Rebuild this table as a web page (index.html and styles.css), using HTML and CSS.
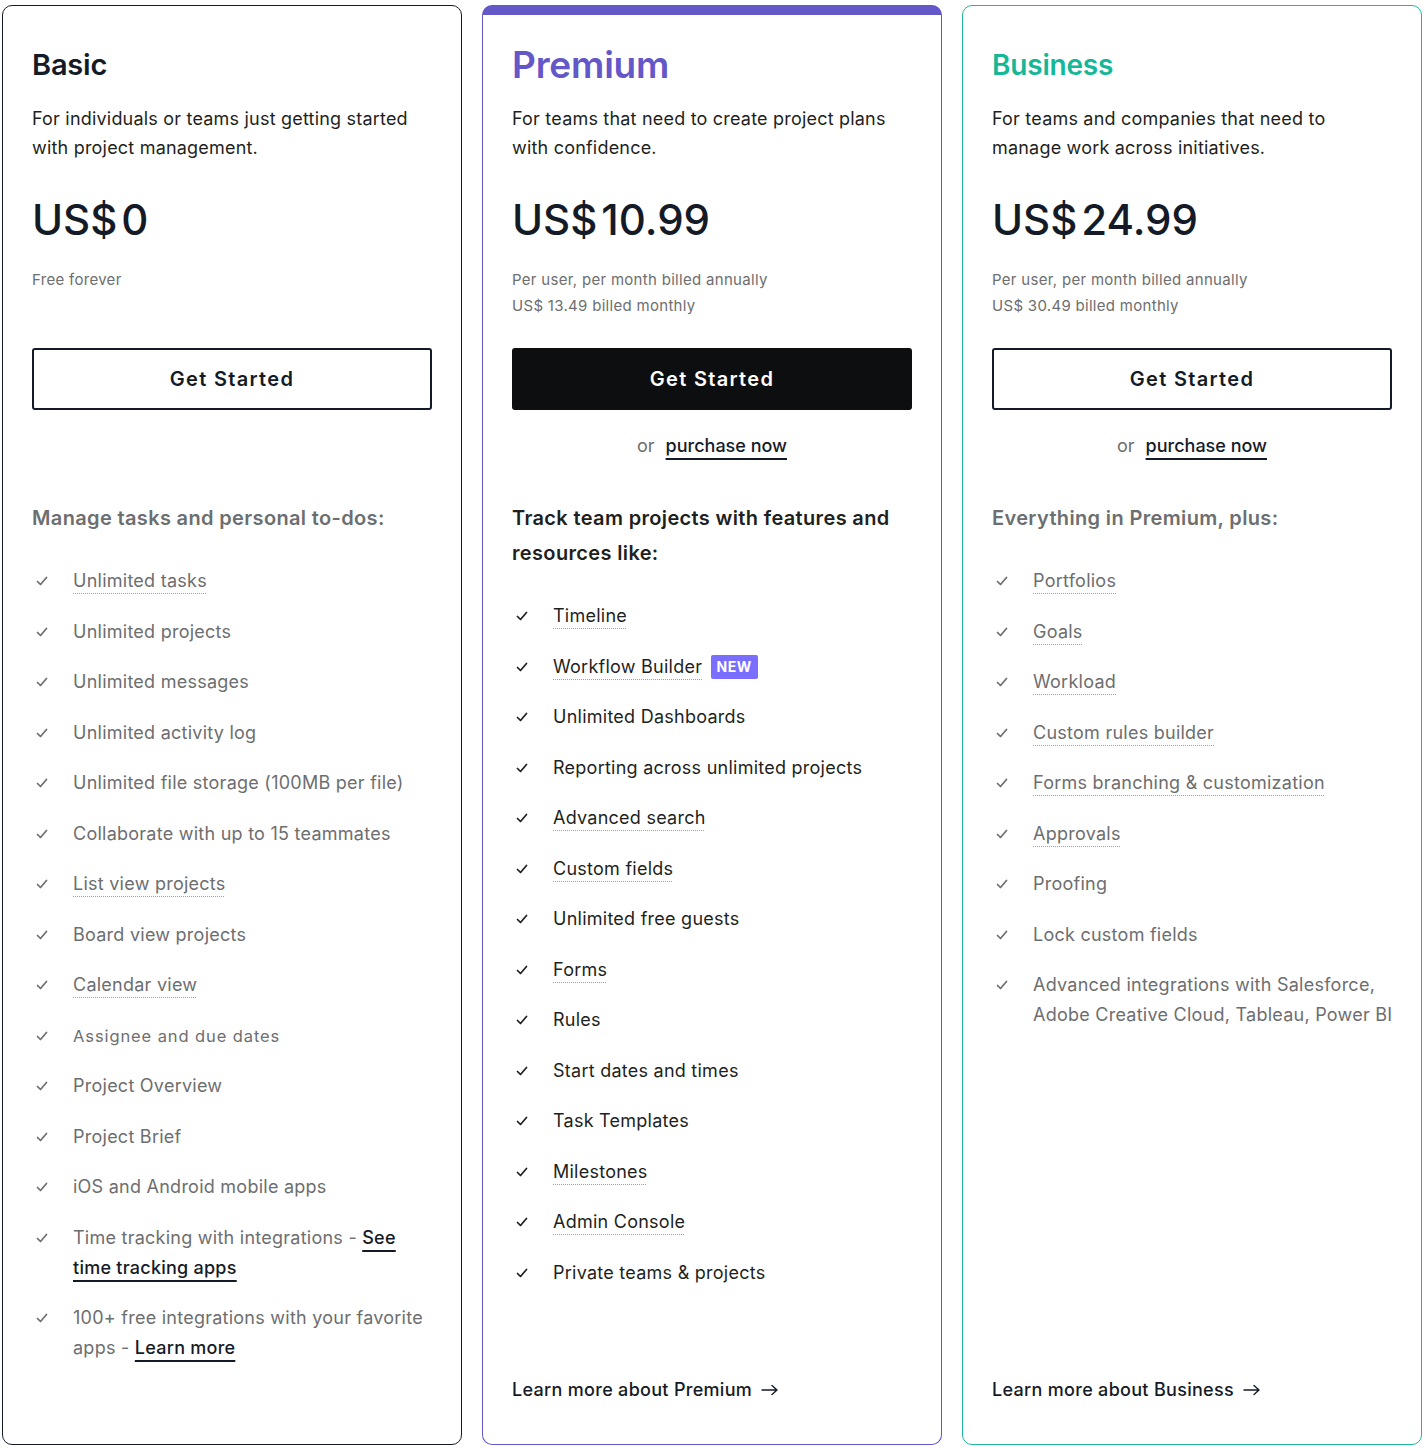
FILE: index.html
```html
<!DOCTYPE html>
<html lang="en">
<head>
<meta charset="utf-8">
<title>Pricing</title>
<link rel="stylesheet" href="styles.css">
</head>
<body>
<div class="plans">
  <section class="card card-basic">
    <h2 class="title">Basic</h2>
    <p class="desc">For individuals or teams just getting started with project management.</p>
    <div class="price">US$<span class="amt">0</span></div>
    <div class="sub">Free forever</div>
    <a class="btn">Get Started</a>
    <div class="or hidden">or <a class="buy">purchase now</a></div>
    <h3 class="lead muted">Manage tasks and personal to-dos:</h3>
    <ul class="feats muted">
      <li><svg class="chk" viewBox="0 0 12 12"><path d="M1.5 6.5l3 3 6-7"/></svg><span class="tip">Unlimited tasks</span></li>
      <li><svg class="chk" viewBox="0 0 12 12"><path d="M1.5 6.5l3 3 6-7"/></svg><span>Unlimited projects</span></li>
      <li><svg class="chk" viewBox="0 0 12 12"><path d="M1.5 6.5l3 3 6-7"/></svg><span>Unlimited messages</span></li>
      <li><svg class="chk" viewBox="0 0 12 12"><path d="M1.5 6.5l3 3 6-7"/></svg><span>Unlimited activity log</span></li>
      <li><svg class="chk" viewBox="0 0 12 12"><path d="M1.5 6.5l3 3 6-7"/></svg><span>Unlimited file storage (100MB per file)</span></li>
      <li><svg class="chk" viewBox="0 0 12 12"><path d="M1.5 6.5l3 3 6-7"/></svg><span>Collaborate with up to 15 teammates</span></li>
      <li><svg class="chk" viewBox="0 0 12 12"><path d="M1.5 6.5l3 3 6-7"/></svg><span class="tip">List view projects</span></li>
      <li><svg class="chk" viewBox="0 0 12 12"><path d="M1.5 6.5l3 3 6-7"/></svg><span>Board view projects</span></li>
      <li><svg class="chk" viewBox="0 0 12 12"><path d="M1.5 6.5l3 3 6-7"/></svg><span class="tip">Calendar view</span></li>
      <li><svg class="chk" viewBox="0 0 12 12"><path d="M1.5 6.5l3 3 6-7"/></svg><span class="small">Assignee and due dates</span></li>
      <li><svg class="chk" viewBox="0 0 12 12"><path d="M1.5 6.5l3 3 6-7"/></svg><span>Project Overview</span></li>
      <li><svg class="chk" viewBox="0 0 12 12"><path d="M1.5 6.5l3 3 6-7"/></svg><span>Project Brief</span></li>
      <li><svg class="chk" viewBox="0 0 12 12"><path d="M1.5 6.5l3 3 6-7"/></svg><span>iOS and Android mobile apps</span></li>
      <li><svg class="chk" viewBox="0 0 12 12"><path d="M1.5 6.5l3 3 6-7"/></svg><span>Time tracking with integrations - <a class="strong">See<br>time tracking apps</a></span></li>
      <li><svg class="chk" viewBox="0 0 12 12"><path d="M1.5 6.5l3 3 6-7"/></svg><span>100+ free integrations with your favorite apps - <a class="strong">Learn more</a></span></li>
    </ul>
    <div class="more hidden">Learn more</div>
  </section>

  <section class="card card-premium">
    <h2 class="title">Premium</h2>
    <p class="desc">For teams that need to create project plans with confidence.</p>
    <div class="price">US$<span class="amt">10.99</span></div>
    <div class="sub">Per user, per month billed annually<br>US$ 13.49 billed monthly</div>
    <a class="btn btn-dark">Get Started</a>
    <div class="or">or <a class="buy">purchase now</a></div>
    <h3 class="lead">Track team projects with features and resources like:</h3>
    <ul class="feats">
      <li><svg class="chk" viewBox="0 0 12 12"><path d="M1.5 6.5l3 3 6-7"/></svg><span class="tip">Timeline</span></li>
      <li><svg class="chk" viewBox="0 0 12 12"><path d="M1.5 6.5l3 3 6-7"/></svg><span><span class="tip">Workflow Builder</span> <span class="badge">NEW</span></span></li>
      <li><svg class="chk" viewBox="0 0 12 12"><path d="M1.5 6.5l3 3 6-7"/></svg><span>Unlimited Dashboards</span></li>
      <li><svg class="chk" viewBox="0 0 12 12"><path d="M1.5 6.5l3 3 6-7"/></svg><span>Reporting across unlimited projects</span></li>
      <li><svg class="chk" viewBox="0 0 12 12"><path d="M1.5 6.5l3 3 6-7"/></svg><span class="tip">Advanced search</span></li>
      <li><svg class="chk" viewBox="0 0 12 12"><path d="M1.5 6.5l3 3 6-7"/></svg><span class="tip">Custom fields</span></li>
      <li><svg class="chk" viewBox="0 0 12 12"><path d="M1.5 6.5l3 3 6-7"/></svg><span>Unlimited free guests</span></li>
      <li><svg class="chk" viewBox="0 0 12 12"><path d="M1.5 6.5l3 3 6-7"/></svg><span class="tip">Forms</span></li>
      <li><svg class="chk" viewBox="0 0 12 12"><path d="M1.5 6.5l3 3 6-7"/></svg><span>Rules</span></li>
      <li><svg class="chk" viewBox="0 0 12 12"><path d="M1.5 6.5l3 3 6-7"/></svg><span>Start dates and times</span></li>
      <li><svg class="chk" viewBox="0 0 12 12"><path d="M1.5 6.5l3 3 6-7"/></svg><span>Task Templates</span></li>
      <li><svg class="chk" viewBox="0 0 12 12"><path d="M1.5 6.5l3 3 6-7"/></svg><span class="tip">Milestones</span></li>
      <li><svg class="chk" viewBox="0 0 12 12"><path d="M1.5 6.5l3 3 6-7"/></svg><span class="tip">Admin Console</span></li>
      <li><svg class="chk" viewBox="0 0 12 12"><path d="M1.5 6.5l3 3 6-7"/></svg><span>Private teams &amp; projects</span></li>
    </ul>
    <a class="more">Learn more about Premium <svg class="arrow" viewBox="0 0 18 12"><path d="M1 6h15M11 1.5 16 6l-5 4.5"/></svg></a>
  </section>

  <section class="card card-business">
    <h2 class="title">Business</h2>
    <p class="desc">For teams and companies that need to manage work across initiatives.</p>
    <div class="price">US$<span class="amt">24.99</span></div>
    <div class="sub">Per user, per month billed annually<br>US$ 30.49 billed monthly</div>
    <a class="btn">Get Started</a>
    <div class="or">or <a class="buy">purchase now</a></div>
    <h3 class="lead muted">Everything in Premium, plus:</h3>
    <ul class="feats muted">
      <li><svg class="chk" viewBox="0 0 12 12"><path d="M1.5 6.5l3 3 6-7"/></svg><span class="tip">Portfolios</span></li>
      <li><svg class="chk" viewBox="0 0 12 12"><path d="M1.5 6.5l3 3 6-7"/></svg><span class="tip">Goals</span></li>
      <li><svg class="chk" viewBox="0 0 12 12"><path d="M1.5 6.5l3 3 6-7"/></svg><span class="tip">Workload</span></li>
      <li><svg class="chk" viewBox="0 0 12 12"><path d="M1.5 6.5l3 3 6-7"/></svg><span class="tip">Custom rules builder</span></li>
      <li><svg class="chk" viewBox="0 0 12 12"><path d="M1.5 6.5l3 3 6-7"/></svg><span class="tip">Forms branching &amp; customization</span></li>
      <li><svg class="chk" viewBox="0 0 12 12"><path d="M1.5 6.5l3 3 6-7"/></svg><span class="tip">Approvals</span></li>
      <li><svg class="chk" viewBox="0 0 12 12"><path d="M1.5 6.5l3 3 6-7"/></svg><span>Proofing</span></li>
      <li><svg class="chk" viewBox="0 0 12 12"><path d="M1.5 6.5l3 3 6-7"/></svg><span>Lock custom fields</span></li>
      <li><svg class="chk" viewBox="0 0 12 12"><path d="M1.5 6.5l3 3 6-7"/></svg><span>Advanced integrations with Salesforce, Adobe Creative Cloud, Tableau, Power BI</span></li>
    </ul>
    <a class="more">Learn more about Business <svg class="arrow" viewBox="0 0 18 12"><path d="M1 6h15M11 1.5 16 6l-5 4.5"/></svg></a>
  </section>
</div>
</body>
</html>
```

FILE: styles.css
```css
* { box-sizing: border-box; }

html, body {
  margin: 0;
  padding: 0;
  background: #ffffff;
}

body {
  font-family: "Inter", "Noto Sans", sans-serif;
  color: #1e1f21;
  -webkit-font-smoothing: antialiased;
}

.plans {
  display: grid;
  grid-template-columns: repeat(3, 460px);
  column-gap: 20px;
  padding: 5px 0 0 2px;
  align-items: stretch;
}

.card {
  display: flex;
  flex-direction: column;
  border: 1px solid #151b26;
  border-radius: 10px;
  padding: 41px 29px 39px;
  height: 1440px;
}

.card-premium {
  border-color: #6457c8;
  border-top-width: 10px;
  padding-top: 32px;
}

.card-business {
  border-color: #1eb79a;
}

.title {
  margin: 0;
  font-size: 29px;
  line-height: 36px;
  font-weight: 600;
  letter-spacing: -0.2px;
  color: #151b26;
}

.card-premium .title {
  font-size: 37px;
  color: #6457c8;
}

.card-business .title {
  font-size: 28px;
  color: #14b796;
}

.desc {
  margin: 21px 0 0;
  font-size: 18px;
  line-height: 29px;
  letter-spacing: 0.2px;
  color: #1e1f21;
}

.price {
  margin-top: 34px;
  font-size: 42px;
  line-height: 48px;
  font-weight: 500;
  letter-spacing: 0;
  color: #151b26;
}

.amt {
  margin-left: 4px;
}

.sub {
  margin-top: 23px;
  min-height: 52px;
  font-size: 15px;
  line-height: 26px;
  letter-spacing: 0.3px;
  color: #6d6e6f;
}

.btn {
  display: flex;
  align-items: center;
  justify-content: center;
  margin-top: 29px;
  height: 62px;
  border: 2px solid #151b26;
  border-radius: 3px;
  font-size: 20px;
  font-weight: 600;
  letter-spacing: 1.3px;
  color: #151b26;
}

.btn-dark {
  background: #0d0e10;
  border-color: #0d0e10;
  color: #ffffff;
}

.or {
  margin-top: 21px;
  text-align: center;
  font-size: 18px;
  line-height: 30px;
  color: #6d6e6f;
}

.buy {
  margin-left: 6px;
  color: #151b26;
  font-weight: 500;
  text-decoration: underline;
  text-decoration-thickness: 2px;
  text-underline-offset: 6px;
}

.hidden {
  visibility: hidden;
}

.lead {
  margin: 40px 0 0;
  font-size: 20px;
  line-height: 35px;
  font-weight: 600;
  letter-spacing: 0.35px;
  color: #1e1f21;
}

.lead.muted {
  color: #6d6e6f;
}

.feats {
  list-style: none;
  margin: 30px -4px 0 0;
  padding: 0;
  display: flex;
  flex-direction: column;
  gap: 20.5px;
  font-size: 18px;
  line-height: 30px;
  letter-spacing: 0.25px;
  color: #1e1f21;
}

.feats.muted {
  color: #6d6e6f;
}

.feats li {
  display: flex;
  align-items: flex-start;
}

.chk {
  flex: 0 0 12px;
  width: 12px;
  height: 12px;
  margin: 9px 25px 0 4px;
  fill: none;
  stroke: #1e1f21;
  stroke-width: 1.7;
  stroke-linecap: round;
  stroke-linejoin: round;
}

.muted .chk {
  stroke: #6d6e6f;
}

.tip {
  text-decoration: underline dotted #9ca0a6;
  text-decoration-thickness: 1px;
  text-underline-offset: 6px;
}

.small {
  font-size: 16.5px;
  letter-spacing: 0.9px;
}

.strong {
  color: #151b26;
  font-weight: 500;
  text-decoration: underline;
  text-decoration-thickness: 2px;
  text-underline-offset: 6px;
}

.badge {
  display: inline-block;
  margin-left: 3px;
  padding: 0 6px;
  background: #796eff;
  color: #ffffff;
  font-size: 14px;
  line-height: 24px;
  font-weight: 700;
  letter-spacing: 0.5px;
  border-radius: 2px;
  vertical-align: 1px;
}

.more {
  margin-top: auto;
  display: flex;
  align-items: center;
  font-size: 18px;
  line-height: 30px;
  font-weight: 500;
  letter-spacing: 0.3px;
  color: #151b26;
}

.arrow {
  width: 18px;
  height: 12px;
  margin-left: 9px;
  fill: none;
  stroke: #151b26;
  stroke-width: 1.4;
  stroke-linecap: round;
  stroke-linejoin: round;
}
```
